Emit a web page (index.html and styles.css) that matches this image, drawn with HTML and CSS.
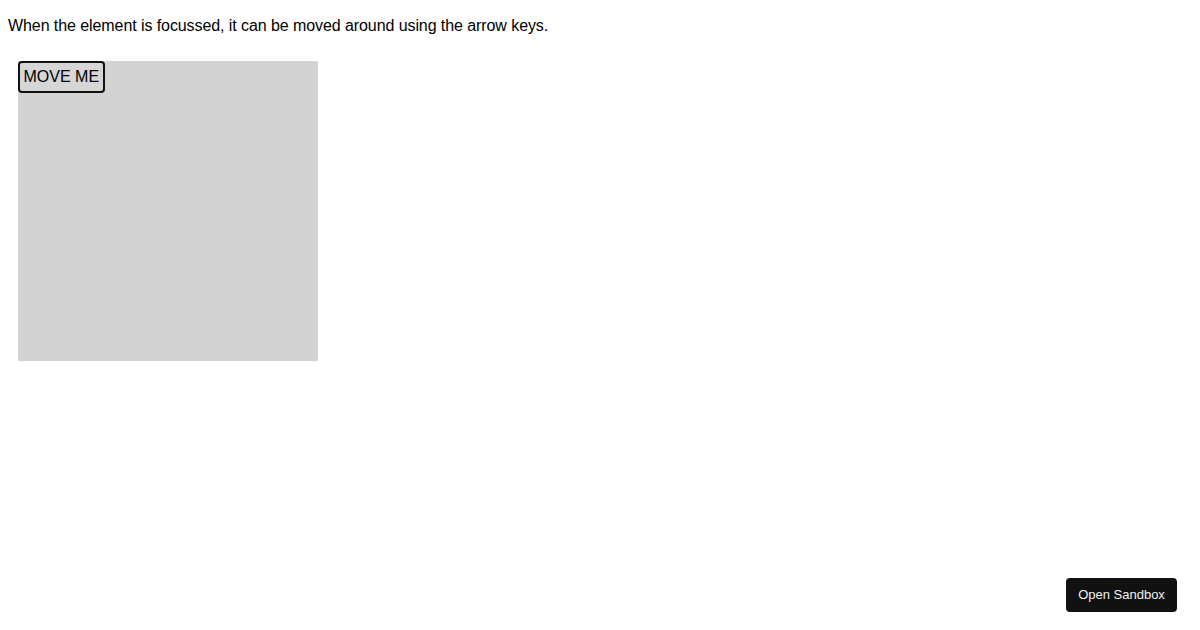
FILE: index.html
```html
<!DOCTYPE html>
<html>
<head>
<meta charset="utf-8">
<link rel="stylesheet" href="styles.css">
</head>
<body>
<p class="intro">When the element is focussed, it can be moved around using the arrow keys.</p>
<div class="stage">
  <div class="canvas">
    <button class="mover" type="button">MOVE ME</button>
  </div>
</div>
<a class="sandbox" href="#">Open Sandbox</a>
</body>
</html>
```
FILE: styles.css
```css
html, body {
  background: #ffffff;
}
body {
  margin: 0 8px;
  font-family: "Liberation Sans", Arial, sans-serif;
  font-size: 16px;
  color: #000;
}
.intro {
  margin: 17px 0 15px;
  line-height: 18px;
  letter-spacing: -0.08px;
}
.stage {
  padding: 11px 10px;
}
.canvas {
  width: 300px;
  height: 300px;
  background: #d3d3d3;
}
.mover {
  display: block;
  margin: 0;
  font-family: "Liberation Sans", Arial, sans-serif;
  font-size: 16px;
  line-height: 19px;
  padding: 4px 3.5px 5px;
  color: #000;
  background: #d6d6d6;
  border: 2px solid #111;
  border-radius: 4px;
}
.sandbox {
  position: fixed;
  right: 23px;
  bottom: 18px;
  width: 111px;
  height: 34px;
  box-sizing: border-box;
  padding-bottom: 1px;
  display: flex;
  align-items: center;
  justify-content: center;
  background: #111111;
  color: #f2f2f2;
  font-family: "Liberation Sans", Arial, sans-serif;
  font-size: 13px;
  text-decoration: none;
  border-radius: 4px;
}
```
